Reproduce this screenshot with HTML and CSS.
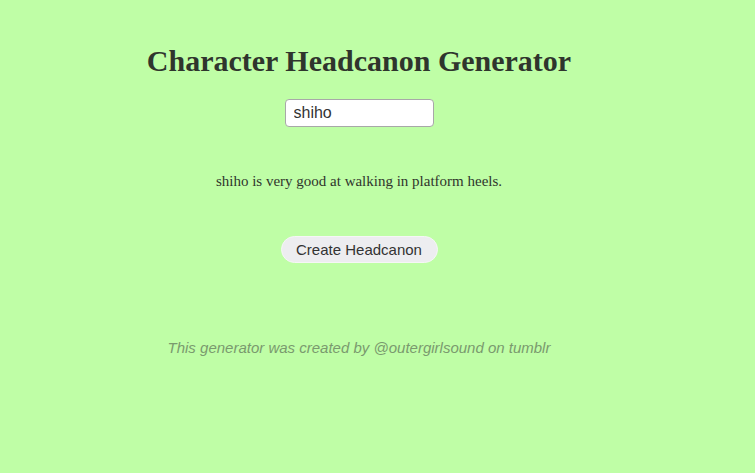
FILE: index.html
```html
<!DOCTYPE html>
<html>
<head>
<meta charset="utf-8">
<link rel="stylesheet" href="styles.css">
</head>
<body>
<main class="page">
  <h1 class="title">Character Headcanon Generator</h1>
  <input class="name-input" type="text" value="shiho">
  <p class="result">shiho is very good at walking in platform heels.</p>
  <button class="create-btn" type="button">Create Headcanon</button>
  <p class="credit">This generator was created by @outergirlsound on tumblr</p>
</main>
</body>
</html>
```
FILE: styles.css
```css
html, body {
  margin: 0;
  padding: 0;
  background: #bffea6;
}

body {
  width: 755px;
  height: 473px;
  overflow: hidden;
}

.page {
  width: 718px;
  display: flex;
  flex-direction: column;
  align-items: center;
  padding-top: 42px;
}

.title {
  margin: 0;
  font-family: "Liberation Serif", serif;
  font-weight: bold;
  font-size: 30px;
  line-height: 38px;
  color: #2f352d;
}

.name-input {
  margin-top: 19px;
  width: 149px;
  height: 28px;
  box-sizing: border-box;
  border: 1px solid #a8a8a8;
  border-radius: 4px;
  padding: 0 8px;
  font-family: "Liberation Sans", sans-serif;
  font-size: 16px;
  color: #333;
  background: #fff;
  outline: none;
}

.result {
  margin: 44px 0 0;
  font-family: "Liberation Serif", serif;
  font-size: 15px;
  line-height: 20px;
  color: #2f352d;
}

.create-btn {
  margin-top: 45px;
  width: 157px;
  height: 27px;
  box-sizing: border-box;
  border: 1px solid #f6f6f6;
  border-radius: 14px;
  background: #ededf0;
  font-family: "Liberation Sans", sans-serif;
  font-size: 15px;
  color: #333;
  padding: 0;
}

.credit {
  margin: 75px 0 0;
  font-family: "Liberation Sans", sans-serif;
  font-style: italic;
  font-size: 15px;
  line-height: 20px;
  color: #7a9a6e;
}
```
